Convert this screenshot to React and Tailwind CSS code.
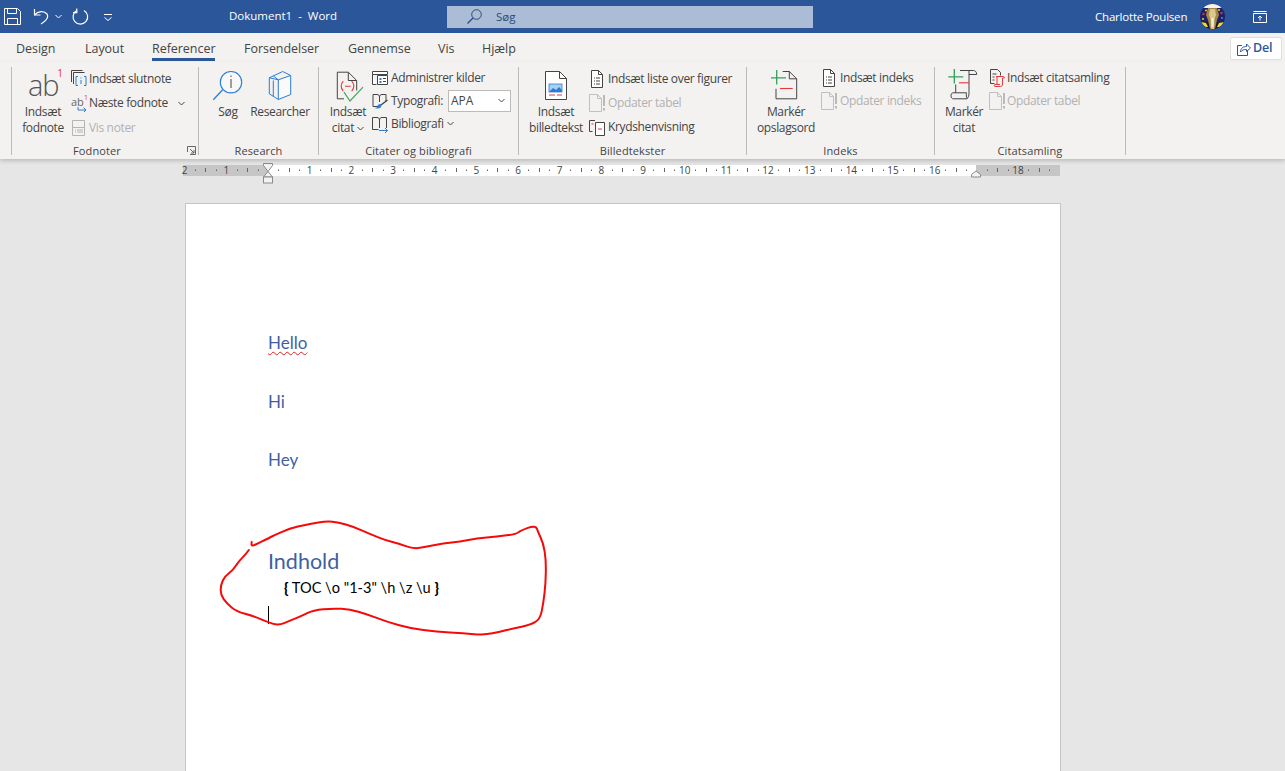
import React from 'react';

const uiFont = { fontFamily: '"Open Sans", "Noto Sans", sans-serif' };

const tabs = [
  { name: 'Design', w: 69 },
  { name: 'Layout', w: 67 },
  { name: 'Referencer', w: 92, active: true },
  { name: 'Forsendelser', w: 104 },
  { name: 'Gennemse', w: 90 },
  { name: 'Vis', w: 44 },
  { name: 'Hjælp', w: 50 },
];

const SaveIcon = () => (
  <svg width="17" height="17" viewBox="0 0 17 17" fill="none" stroke="#fff">
    <path d="M.5.5h13l3 3v13H.5z" />
    <path d="M3.500.5v5h9v-5M3.500 16.500v-6h10v6" />
  </svg>
);

const UndoIcon = () => (
  <svg width="16" height="17" viewBox="0 0 16 17" fill="none" stroke="#fff" strokeWidth="1.2">
    <path d="M1.500 1v6h6" />
    <path d="M1.500 7 C5 3 11 2.500 14 6 C16 9.500 13 13 8 16" />
  </svg>
);

const RedoIcon = () => (
  <svg width="17" height="17" viewBox="0 0 17 17" fill="none" stroke="#fff" strokeWidth="1.2">
    <path d="M12 2.500 A7.300 7.300 0 1 1 4.600 2.600" />
    <path d="M4.800 1v4.200H1" transform="translate(0 -.5)" />
  </svg>
);

const Avatar = () => (
  <svg width="25" height="25" viewBox="0 0 25 25">
    <defs>
      <clipPath id="avatarClip"><circle cx="12.500" cy="12.500" r="12.500" /></clipPath>
    </defs>
    <g clipPath="url(#avatarClip)">
      <rect width="25" height="25" fill="#1f2068" />
      <rect width="25" height="4" fill="#f6f3ea" />
      <path d="M0 18h25v7H0z" fill="#1a1a30" />
      <path d="M1 18l5 1 2 4H3zM24 18l-5 1-2 4h5z" fill="#f0dc30" />
      <path d="M8 4h9l2 7-2 5-2 9h-5l-2-9-2-5z" fill="#a58748" />
      <path d="M10 5h5l1 6-1.500 4-.5 10h-3l-.5-10L9 11z" fill="#dcc88e" />
      <path d="M11 14h3l-.5 9h-2z" fill="#f2ead0" />
      <circle cx="3.500" cy="10" r="1.200" fill="#d8333a" />
      <circle cx="6" cy="6.500" r="1" fill="#e8d02a" />
      <circle cx="21.500" cy="9" r="1.200" fill="#d8333a" />
      <circle cx="19" cy="6" r="1" fill="#e8d02a" />
      <circle cx="3" cy="15" r="1" fill="#e8d02a" />
      <circle cx="22" cy="14" r="1" fill="#4a90d8" />
    </g>
  </svg>
);

const Big = ({ w = 36, h = 36, children }) => (
  <svg width={w} height={h} viewBox={`0 0 ${w} ${h}`} fill="none">{children}</svg>
);

const Small = ({ children }) => (
  <svg width="16" height="18" viewBox="0 0 16 18" fill="none" className="shrink-0">{children}</svg>
);

const FootnoteGlyph = () => (
  <div className="relative h-[37px] w-[34px]">
    <span className="absolute left-[2px] top-[1px] text-[29px] leading-[34px] font-light text-[#555] tracking-[-1px]">ab</span>
    <span className="absolute right-[-3px] top-[0px] text-[10px] leading-[12px] text-[#e03a3a]">1</span>
  </div>
);

const SearchBig = () => (
  <Big w={32} h={32}>
    <circle cx="19" cy="12.200" r="10.700" stroke="#2b7cd3" strokeWidth="1.100" fill="#f8f8f8" />
    <path d="M10.700 19.800 1.300 29.800" stroke="#2b7cd3" strokeWidth="1.300" />
    <path d="M19 5.500v1.500M19 9v9" stroke="#555" strokeWidth="1.100" />
  </Big>
);

const ResearcherBig = () => (
  <Big w={26} h={30}>
    <path d="M11.300 8.800 23.700 4.500v19l-12.400 5z" fill="#fafafa" stroke="#2b7cd3" />
    <path d="M2.300 6.800 15.700.5l8 4M2.300 6.800v16l9 5.700M6.300 9.500v16M6.300 4.900l5 3.900M2.300 6.800l9 2" stroke="#2b7cd3" />
  </Big>
);

const CitationBig = () => (
  <Big w={32} h={34}>
    <g transform="translate(1 0)">
      <path d="M4.300 3.200h11l8.400 8.300v10M4.300 3.200v26.600H11" stroke="#444" />
      <path d="M15.300 3.200v8.300h8.400" stroke="#444" />
      <path d="M10.300 12.200Q6 17 10.300 22.200M18.700 12.200Q23 17 18.700 22.200M12 17.200h5.700" stroke="#e03a3a" strokeWidth="1.100" />
      <path d="M11 23.200 17 32 30 18.200" stroke="#4aa564" strokeWidth="1.200" />
    </g>
  </Big>
);

const CaptionBig = () => (
  <Big w={24} h={32}>
    <path d="M1.500 1.500h14l7 7v21h-21z" stroke="#444" fill="#fff" />
    <path d="M15.500 1.500v7h7" stroke="#444" />
    <rect x="5" y="14" width="13" height="8" fill="#a9d0ee" stroke="#2b7cd3" strokeWidth=".8" />
    <path d="M5 22l4-4 3 2 3-3 3 3v2z" fill="#2b7cd3" />
    <path d="M5 25h6M13 25h5" stroke="#e03a3a" strokeWidth="1.100" />
  </Big>
);

const MarkEntryBig = () => (
  <Big w={30} h={32}>
    <path d="M11.700 1.500h6.600l7.400 7.300v20H5v-10" stroke="#444" />
    <path d="M18.300 1.500v7.300h7.400" stroke="#444" />
    <path d="M0 7.800h15M5.700 0v14.500" stroke="#2fa35a" strokeWidth="1.300" />
    <path d="M9 18.500h12.700" stroke="#e03a3a" strokeWidth="1.100" />
  </Big>
);

const MarkCitationBig = () => (
  <Big w={32} h={34}>
    <path d="M12 1.500h13.300c2 0 3.400 1.500 3.400 4h-7.700M21 1.700v22.100c0 3-.5 5-2.300 6H5.300c-1.500 0-2.300-1.500-2.300-2.800 0-2 .7-3.200 2-3.200h13.500c-.5 2 0 4.500.5 6M7.700 15.500v8.300" stroke="#444" />
    <path d="M.3 7.800h15M6.300 0v14.500" stroke="#2fa35a" strokeWidth="1.300" />
    <path d="M11 13.800h10" stroke="#e03a3a" strokeWidth="1.100" />
  </Big>
);

const EndnoteIcon = () => (
  <Small>
    <path d="M.5 12V.5h11M2.500 14V2.500h11" stroke="#444" />
    <path d="M7 6.500H5v9h2M13 6.500h2v9h-2" stroke="#2b7cd3" />
    <path d="M10 7.500v1M10 10v4" stroke="#2b7cd3" />
  </Small>
);

const NextNoteIcon = () => (
  <Small>
    <text x="0" y="12" fontSize="11" fill="#666" fontFamily="Open Sans">ab</text>
    <text x="13" y="6" fontSize="7" fill="#e03a3a" fontFamily="Open Sans">1</text>
    <path d="M7 13v3h8M12.500 13.500 15 16l-2.500 2.500" stroke="#2b7cd3" />
  </Small>
);

const ShowNotesIcon = () => (
  <Small>
    <path d="M1.500 1.500h12v15h-12zM1.500 8.500h12" stroke="#b4b4b4" />
    <path d="M4 11h1M6 11h6M4 13h1M6 13h6" stroke="#b4b4b4" />
  </Small>
);

const ManageIcon = () => (
  <Small>
    <path d="M.5 2.500h15v3H.5zM.5 5.500v10h4" stroke="#444" fill="#fff" />
    <path d="M5.500 6.500h10v9h-10z" stroke="#444" fill="#fff" />
    <path d="M7.500 9h2v2h-2zM7.500 12h2v2h-2z" fill="#2b7cd3" />
    <path d="M11 9.500h3M11 12.500h3" stroke="#444" />
  </Small>
);

const StyleIcon = () => (
  <Small>
    <path d="M1 2.500h4c1.500 0 2.500 1 2.500 2.500 0-1.500 1-2.500 2.500-2.500h4v7M1 2.500v12h5M7.500 5v5" stroke="#444" />
    <path d="M15.500 8 9 13" stroke="#444" strokeWidth="1.400" />
    <path d="M8.500 12c-2 0-3 1-3 2s-1 2-3 2c3 1 7 1 7-3z" fill="#2b7cd3" />
  </Small>
);

const BibliographyIcon = () => (
  <Small>
    <path d="M.5 2.500h4.500c1.500 0 2.500 1 2.500 2.500 0-1.500 1-2.500 2.500-2.500h4.500v10.500M.5 2.500v12h6M7.500 5v8" stroke="#444" />
    <path d="M7 15.500h8.500M13 13l2.500 2.500L13 18" stroke="#2b7cd3" />
  </Small>
);

const ListIcon = () => (
  <Small>
    <path d="M2.500.5h7l4 4v13h-11z" stroke="#444" fill="#fff" />
    <path d="M9.500.5v4h4" stroke="#444" />
    <path d="M5 8h1M7 8h4M5 11h1M7 11h4M5 14h1M7 14h4" stroke="#444" />
  </Small>
);

const RefreshDocIcon = () => (
  <Small>
    <path d="M.5.5h8l4 4v13H.5z" stroke="#c0c0c0" />
    <path d="M8.500.5v4h4" stroke="#c0c0c0" />
    <path d="M15 1v11M15 14v2.500" stroke="#b4b4b4" strokeWidth="1.800" />
  </Small>
);

const CrossRefIcon = () => (
  <Small>
    <path d="M6 2.500H.5v11h3" stroke="#444" />
    <path d="M6.500 4.500h9v13h-9z" stroke="#444" fill="#fff" />
    <path d="M2.500 6h2M9 11h4" stroke="#e03a3a" />
  </Small>
);

const TableAuthIcon = () => (
  <Small>
    <path d="M1.500.5h7l3 3v3M1.500.5v14h4" stroke="#444" />
    <path d="M3.500 5h4M3.500 8h2M3.500 11h2" stroke="#444" />
    <path d="M7 7.500h7c1 0 1.500.5 1.500 1.500h-2v6c0 2-1 2.500-2 2.500H6c-1 0-1-2 0-2h5M8 7.500v8" stroke="#e03a3a" />
  </Small>
);

const Chevron = ({ color = '#444' }) => (
  <svg width="7" height="5" viewBox="0 0 7 5" fill="none" className="shrink-0">
    <path d="M.5 1 3.500 4l3-3" stroke={color} />
  </svg>
);

const LargeButton = ({ width, icon, lines, chevron }) => (
  <div className="flex flex-col items-center shrink-0" style={{ width }}>
    <div className="h-[37px] flex items-center justify-center">{icon}</div>
    {lines.map((line, i) => (
      <div key={line} className="text-[12px] leading-[16px] text-[#444] tracking-[-0.35px] whitespace-nowrap flex items-center gap-[3px]">
        {line}
        {chevron && i === lines.length - 1 && <Chevron />}
      </div>
    ))}
  </div>
);

const SmallRow = ({ icon, label, disabled, chevron, h = 'h-[24px]', children }) => (
  <div className={`flex items-center gap-[2px] whitespace-nowrap ${h}`}>
    {icon}
    <span className={`text-[12px] tracking-[-0.35px] ${disabled ? 'text-[#b1b1b1]' : 'text-[#444]'}`}>{label}</span>
    {chevron}
    {children}
  </div>
);

const Group = ({ label, width, launcher, className = '', children }) => (
  <div className="relative flex flex-col h-[88px] border-r border-[#bdbbb9] shrink-0" style={{ width }}>
    <div className={`flex flex-1 ${className}`}>{children}</div>
    <div className={`text-[11px] leading-[14px] tracking-[0.12px] text-[#444] text-center -mb-[3px] ${launcher ? 'pr-[16px]' : ''}`}>{label}</div>
    {launcher && (
      <svg width="9" height="9" viewBox="0 0 9 9" fill="none" stroke="#666" className="absolute right-[2px] bottom-0">
        <path d="M.5 6V.5h8v8H3M3 3l4 4M7 4v3H4" />
      </svg>
    )}
  </div>
);

const Ruler = () => {
  const perCm = 41.67;
  const zero = 90;
  const marks = [];
  for (let half = -4; half <= 37; half++) {
    const x = zero + (half / 2) * perCm;
    if (half % 2 === 0) {
      const n = Math.abs(half / 2);
      if (n !== 0 && n !== 17) {
        marks.push(
          <text key={half} x={x} y="12" fontSize="10" textAnchor="middle" fill="#444" fontFamily="Open Sans">{n}</text>
        );
      }
    } else {
      marks.push(<rect key={half} x={Math.round(x)} y="6" width="1" height="4" fill="#666" />);
    }
    marks.push(<rect key={`a${half}`} x={Math.round(x + perCm / 4)} y="7.500" width="1" height="1.500" fill="#666" />);
  }
  return (
    <svg width="890" height="24" viewBox="0 0 890 24" className="block">
      <rect x="5" y="3" width="877" height="11" fill="#c6c6c6" />
      <rect x="90" y="3" width="708" height="11" fill="#fff" />
      {marks}
      <path d="M85.500 1.500h9v2L90 9.500 85.500 3.500zM90 9.500l4.500 5.500h-9z" fill="#f3f3f3" stroke="#8a8a8a" />
      <rect x="85.500" y="15" width="9" height="6" fill="#f3f3f3" stroke="#8a8a8a" />
      <path d="M793.500 15v-2.500L798 9l4.500 3.500V15z" fill="#f3f3f3" stroke="#8a8a8a" />
    </svg>
  );
};

// traced from the reference, then rounded through the midpoints
const redPoints = [
  [125, 96], [124, 110], [150, 97], [165, 90], [200, 72], [225, 62], [250, 52], [300, 42], [350, 33], [385, 37],
  [430, 50], [480, 72], [530, 92], [565, 100], [610, 117], [650, 110], [700, 100], [750, 95], [800, 85],
  [860, 80], [920, 72], [930, 62], [977, 45], [985, 68], [1000, 100], [1008, 150], [1007, 220], [1000, 280],
  [990, 328], [960, 345], [910, 355], [870, 365], [825, 375], [760, 370], [680, 365], [600, 355], [530, 335],
  [470, 312], [420, 298], [370, 295], [310, 300], [270, 320], [240, 332], [205, 347], [170, 335], [130, 318],
  [80, 305], [50, 280], [32, 255], [32, 225], [45, 198], [70, 180], [85, 155], [108, 132], [125, 108],
];

const redLine = redPoints.reduce((d, p, i) => {
  if (i === 0) return `M${p[0]} ${p[1]}`;
  const prev = redPoints[i - 1];
  return `${d} Q${prev[0]} ${prev[1]} ${(prev[0] + p[0]) / 2} ${(prev[1] + p[1]) / 2}`;
}, '');

export default function App() {
  return (
    <div className="relative w-[1285px] h-[771px] overflow-hidden flex flex-col bg-[#e6e6e6]" style={uiFont}>
      {/* title bar */}
      <div className="relative h-[33px] shrink-0 bg-[#2b579a] flex items-center text-white">
        <div className="flex items-center pl-[4px] w-[229px]">
          <SaveIcon />
          <div className="ml-[12px]"><UndoIcon /></div>
          <div className="ml-[6px]"><Chevron color="#fff" /></div>
          <div className="ml-[10px]"><RedoIcon /></div>
          <svg width="8" height="8" viewBox="0 0 8 8" fill="none" stroke="#fff" className="ml-[15px]">
            <path d="M0 1.500h8M.5 4.500 4 7.500l3.500-3" />
          </svg>
        </div>
        <div className="w-[218px] text-[11.5px] -mt-[2px] whitespace-pre">Dokument1  -  Word</div>
        <div className="w-[366px] h-[22px] bg-[#aabcd6] flex items-center pl-[20px] text-[#2b4a7a]">
          <svg width="15" height="15" viewBox="0 0 15 15" fill="none" stroke="#2b4a7a">
            <circle cx="9.500" cy="5.500" r="4.800" />
            <path d="M6 9 .5 14.500" strokeWidth="1.300" />
          </svg>
          <span className="ml-[14px] text-[11.5px]">Søg</span>
        </div>
        <div className="ml-[282px] w-[105px] text-[11.5px] tracking-[-0.2px] whitespace-nowrap">Charlotte Poulsen</div>
        <Avatar />
        <svg width="14" height="12" viewBox="0 0 14 12" fill="none" stroke="#fff" className="ml-[28px]">
          <path d="M.5 2.500h13v9H.5zM.5.5h13" />
          <path d="M7 9.500V5M5 7l2-2 2 2" />
        </svg>
      </div>

      {/* tabs */}
      <div className="h-[29px] shrink-0 bg-[#f3f2f1] flex pl-[16px] relative">
        {tabs.map(t => (
          <div key={t.name} className="shrink-0 pt-[7px]" style={{ width: t.w }}>
            <div className={`w-fit text-[12.5px] leading-[17px] tracking-[-0.04px] text-[#444] ${t.active ? 'border-b-[3px] border-[#2b579a] pb-[1px]' : ''}`}>{t.name}</div>
          </div>
        ))}
        <div className="absolute left-[1230px] top-[4px] w-[52px] h-[23px] bg-white border border-[#e1dfdd] rounded-[2px] flex items-center pl-[6px] gap-[2px] text-[#2b579a]">
          <svg width="14" height="14" viewBox="0 0 14 14" fill="none" stroke="#2b579a">
            <path d="M5 3.500H.5v10h10V9" />
            <path d="M3.500 10c0-4 3-5.500 6-5.500V2L13.500 6l-4 3.500V7.500c-2.500 0-4.500.5-6 2.500z" />
          </svg>
          <span className="text-[12.5px] font-semibold tracking-[-0.2px]">Del</span>
        </div>
      </div>

      {/* ribbon */}
      <div className="h-[97px] shrink-0 bg-[#f3f2f1] pl-[11px] pt-[5px] flex items-start shadow-[0_2px_4px_rgba(0,0,0,0.18)] relative">
        <div className="flex border-l border-[#bdbbb9]">
          <Group label="Fodnoter" width={187} launcher className="pl-[9px]">
            <LargeButton width={44} icon={<FootnoteGlyph />} lines={['Indsæt', 'fodnote']} />
            <div className="ml-[6px]">
              <SmallRow icon={<EndnoteIcon />} label="Indsæt slutnote" />
              <SmallRow icon={<NextNoteIcon />} label="Næste fodnote" chevron={<span className="ml-[8px]"><Chevron /></span>} />
              <SmallRow h="h-[25px]" icon={<ShowNotesIcon />} label="Vis noter" disabled />
            </div>
          </Group>
          <Group label="Research" width={120} className="pl-[15px]">
            <LargeButton width={28} icon={<SearchBig />} lines={['Søg']} />
            <LargeButton width={76} icon={<ResearcherBig />} lines={['Researcher']} />
          </Group>
          <Group label="Citater og bibliografi" width={200} className="pl-[10px]">
            <LargeButton width={38} icon={<CitationBig />} lines={['Indsæt', 'citat']} chevron />
            <div className="ml-[5px] -mt-[1px]">
              <SmallRow h="h-[23px]" icon={<ManageIcon />} label={<span className="ml-[1px]">Administrer kilder</span>} />
              <SmallRow h="h-[23px]" icon={<StyleIcon />} label={<span className="ml-[1px]">Typografi:</span>}>
                <div className="ml-[3px] w-[63px] h-[22px] bg-white border border-[#bdbbb9] flex items-center justify-between pl-[2px] pr-[5px]">
                  <span className="text-[12px] text-[#444]">APA</span>
                  <Chevron />
                </div>
              </SmallRow>
              <SmallRow h="h-[23px]" icon={<BibliographyIcon />} label={<span className="ml-[1px]">Bibliografi</span>} chevron={<span className="ml-[1px]"><Chevron /></span>} />
            </div>
          </Group>
          <Group label="Billedtekster" width={228} className="pl-[10px]">
            <LargeButton width={54} icon={<CaptionBig />} lines={['Indsæt', 'billedtekst']} />
            <div className="ml-[6px]">
              <SmallRow icon={<ListIcon />} label={<span className="ml-[1px]">Indsæt liste over figurer</span>} />
              <SmallRow icon={<RefreshDocIcon />} label={<span className="ml-[1px]">Opdater tabel</span>} disabled />
              <SmallRow icon={<CrossRefIcon />} label={<span className="ml-[1px]">Krydshenvisning</span>} />
            </div>
          </Group>
          <Group label="Indeks" width={188} className="pl-[10px]">
            <LargeButton width={58} icon={<MarkEntryBig />} lines={['Markér', 'opslagsord']} />
            <div className="ml-[6px] -mt-[1px]">
              <SmallRow h="h-[23px]" icon={<ListIcon />} label={<span className="ml-[1px]">Indsæt indeks</span>} />
              <SmallRow h="h-[23px]" icon={<RefreshDocIcon />} label={<span className="ml-[1px]">Opdater indeks</span>} disabled />
            </div>
          </Group>
          <Group label="Citatsamling" width={191} className="pl-[10px]">
            <LargeButton width={38} icon={<MarkCitationBig />} lines={['Markér', 'citat']} />
            <div className="ml-[6px] -mt-[1px]">
              <SmallRow h="h-[23px]" icon={<TableAuthIcon />} label="Indsæt citatsamling" />
              <SmallRow h="h-[23px]" icon={<RefreshDocIcon />} label="Opdater tabel" disabled />
            </div>
          </Group>
        </div>
      </div>

      {/* ruler */}
      <div className="h-[44px] shrink-0 pl-[178px] pt-[3px]">
        <Ruler />
      </div>

      {/* page */}
      <div className="flex-1 pl-[185px]">
        <div className="w-[876px] h-[600px] bg-white border border-[#c6c6c6] pl-[82px] pt-[127px] text-[#3f5f9f]" style={{ fontFamily: 'Lato, sans-serif' }}>
          <div className="h-[59px] text-[17px] leading-[24px]">
            <span className="underline decoration-wavy decoration-[#e02020] decoration-1 underline-offset-2">Hello</span>
          </div>
          <div className="h-[58px] text-[17px] leading-[24px]">Hi</div>
          <div className="h-[98px] text-[17px] leading-[24px]">Hey</div>
          <div className="h-[32px] text-[21.5px] leading-[30px]">Indhold</div>
          <div className="pl-[16px] h-[28px] text-[14.6px] leading-[20px] text-black whitespace-pre">
            <b className="font-black">{'{'}</b> TOC \o "1-3" \h \z \u <b className="font-black">{'}'}</b>
          </div>
          <div className="w-[1px] h-[18px] bg-black" />
        </div>
      </div>

      {/* red freehand annotation */}
      <svg width="350" height="135" viewBox="0 0 1050 405" fill="none" className="absolute left-[210px] top-[510px]">
        <path d={redLine} stroke="#f50a0a" strokeWidth="6" strokeLinejoin="round" strokeLinecap="round" />
      </svg>
    </div>
  );
}
